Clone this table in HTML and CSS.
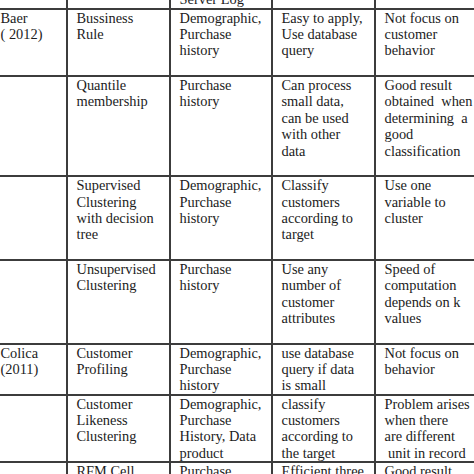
FILE: index.html
```html
<!DOCTYPE html>
<html lang="en">
<head>
<meta charset="utf-8">
<title>Segmentation methods</title>
<link rel="stylesheet" href="styles.css">
</head>
<body>
<table class="tbl">
  <colgroup>
    <col class="c1"><col class="c2"><col class="c3"><col class="c4"><col class="c5">
  </colgroup>
  <tr class="head">
    <td></td><td></td><td>Server Log</td><td></td><td></td>
  </tr>
  <tr class="sp">
    <td>Baer<br>( 2012)</td>
    <td>Bussiness<br>Rule</td>
    <td>Demographic,<br>Purchase<br>history</td>
    <td>Easy to apply,<br>Use database<br>query</td>
    <td>Not focus on<br>customer<br>behavior</td>
  </tr>
  <tr class="sp">
    <td></td>
    <td>Quantile<br>membership</td>
    <td>Purchase<br>history</td>
    <td>Can process<br>small data,<br>can be used<br>with other<br>data</td>
    <td>Good result<br>obtained&nbsp; when<br>determining&nbsp; a<br>good<br>classification</td>
  </tr>
  <tr class="sp">
    <td></td>
    <td>Supervised<br>Clustering<br>with decision<br>tree</td>
    <td>Demographic,<br>Purchase<br>history</td>
    <td>Classify<br>customers<br>according to<br>target</td>
    <td>Use one<br>variable to<br>cluster</td>
  </tr>
  <tr class="sp">
    <td></td>
    <td>Unsupervised<br>Clustering</td>
    <td>Purchase<br>history</td>
    <td>Use any<br>number of<br>customer<br>attributes</td>
    <td>Speed of<br>computation<br>depends on k<br>values</td>
  </tr>
  <tr>
    <td>Colica<br>(2011)</td>
    <td>Customer<br>Profiling</td>
    <td>Demographic,<br>Purchase<br>history</td>
    <td>use database<br>query if data<br>is small</td>
    <td>Not focus on<br>behavior</td>
  </tr>
  <tr>
    <td></td>
    <td>Customer<br>Likeness<br>Clustering</td>
    <td>Demographic,<br>Purchase<br>History, Data<br>product</td>
    <td>classify<br>customers<br>according to<br>the target</td>
    <td>Problem arises<br>when there<br>are different<br>&nbsp;unit in record</td>
  </tr>
  <tr>
    <td></td>
    <td>RFM Cell<br>Classification</td>
    <td>Purchase<br>history</td>
    <td>Efficient three<br>variables</td>
    <td>Good result<br>obtained</td>
  </tr>
</table>
</body>
</html>
```
FILE: styles.css
```css
html, body {
  margin: 0;
  padding: 0;
  background: #ffffff;
  overflow: hidden;
}

.tbl {
  border-collapse: collapse;
  table-layout: fixed;
  width: 486px;
  margin: -10.6px 0 0 -10px;
  font-family: "Liberation Serif", "Times New Roman", serif;
  font-size: 14.4px;
  line-height: 16.35px;
  color: #1c1c1c;
}

.c1 { width: 76px; }
.c2 { width: 103px; }
.c3 { width: 102px; }
.c4 { width: 103px; }
.c5 { width: 102px; }

.tbl td {
  border: 2px solid #3c3c3c;
  padding: 0 2px 0 8.5px;
  vertical-align: top;
  white-space: nowrap;
  overflow: hidden;
}

.tbl .sp td {
  padding-bottom: 16.35px;
}
```
